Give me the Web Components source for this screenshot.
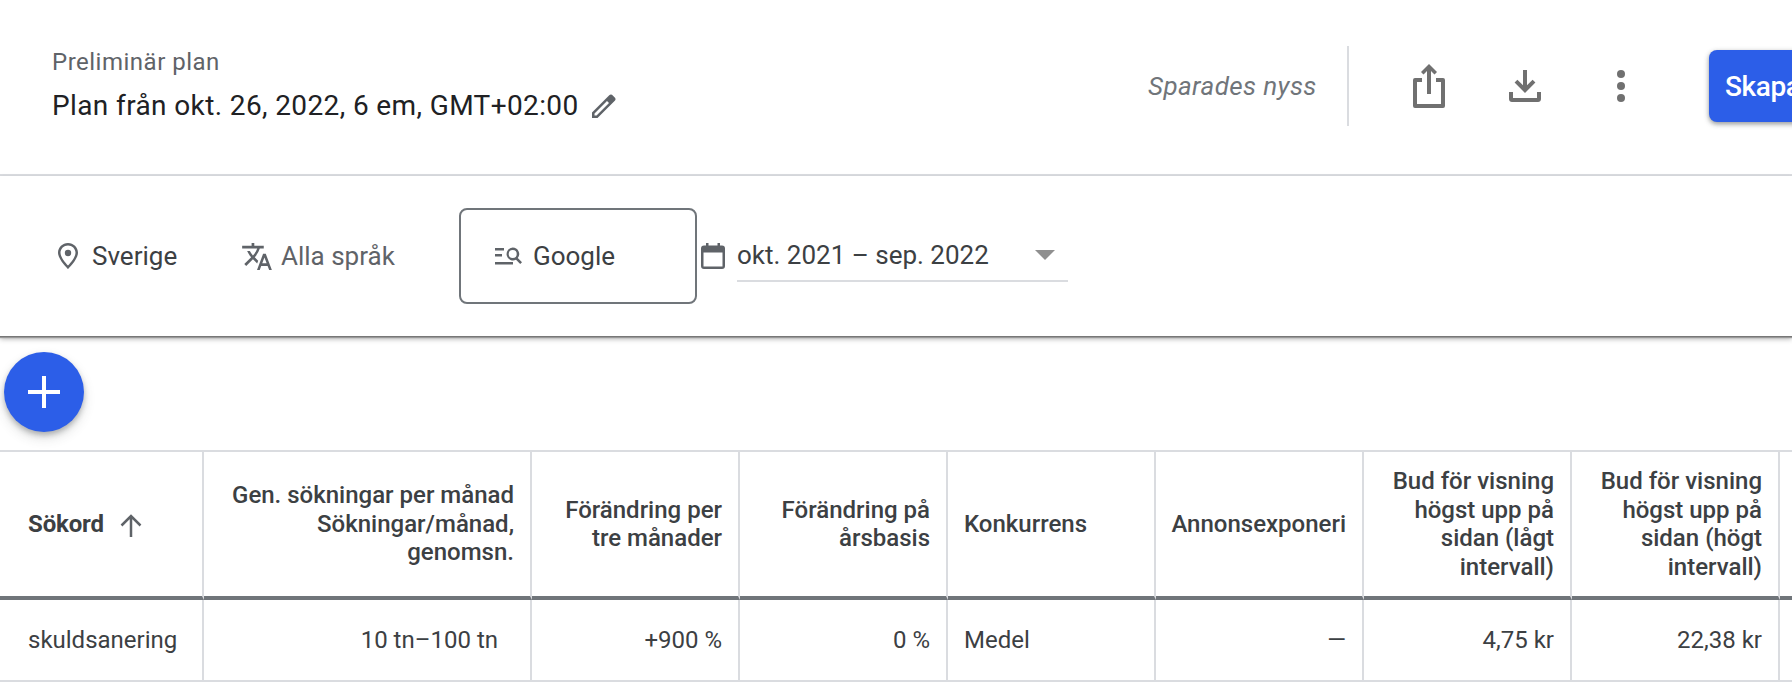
<!DOCTYPE html>
<html lang="sv"><head><meta charset="utf-8"><title>Plan</title>
<style>
html,body{margin:0;padding:0;background:#fff;overflow:hidden}
body{width:1792px;height:686px;font-family:Roboto,"Liberation Sans",sans-serif;color:#3c4043}
</style></head><body>
<plan-page>
  <plan-header></plan-header>
  <plan-filters></plan-filters>
  <plan-toolbar></plan-toolbar>
  <plan-table></plan-table>
</plan-page>
<script>
function def(name,html){customElements.define(name,class extends HTMLElement{constructor(){super();this.attachShadow({mode:'open'}).innerHTML=html;}});}
def('plan-page',`<style>:host{display:flex;flex-direction:column;width:1792px;height:686px;overflow:hidden}</style><slot></slot>`);
def('plan-header',`<style>
:host{display:flex;box-sizing:border-box;height:176px;border-bottom:2px solid #dadce0;width:1792px;padding:0 0 0 52px;align-items:flex-start;overflow:hidden}
.left{padding-top:48px;flex:0 0 1096px}
.sub{font-size:24px;line-height:28px;color:#5f6368;letter-spacing:.5px}
.title{display:flex;align-items:center;margin-top:12px;font-size:28px;line-height:36px;color:#202124;letter-spacing:.38px}
.title svg{margin-left:13px;width:24px;height:24px;fill:#5f6368;flex:none}
.right{display:flex;align-items:center;height:80px;margin-top:46px}
.saved{width:199px;flex:none;font-style:italic;font-size:26px;letter-spacing:.4px;color:#70757a;white-space:nowrap}
.div{width:2px;height:80px;background:#dadce0;flex:none}
.ic{fill:#707070;flex:none;display:block}
.share{margin-left:64px;width:32px;height:44px}
.dl{margin-left:64px;width:32px;height:32px}
.more{margin-left:76px;width:8px;height:32px}
.btn{margin-left:84px;flex:none;width:240px;height:72px;background:#2c5ee8;border-radius:8px;color:#fff;font-size:28px;font-weight:500;letter-spacing:-.4px;display:flex;align-items:center;padding-left:16px;box-sizing:border-box;box-shadow:0 2px 4px rgba(60,64,67,.4),0 2px 6px rgba(60,64,67,.2);white-space:nowrap}
</style>
<div class="left"><div class="sub">Preliminär plan</div><div class="title"><span>Plan från okt. 26, 2022, 6 em, GMT+02:00</span><svg viewBox="0 0 24 24"><path fill-rule="evenodd" d="M0 24V18.500L17 1.500Q18.500 0 20 .8L23 3.800Q24.200 5.300 22.800 6.800L5.500 24ZM2.500 19.500V21.500H4.500L17 9 15 7Z"/></svg></div></div>
<div class="right"><span class="saved">Sparades nyss</span><span class="div"></span>
<svg class="ic share" viewBox="0 0 32 44"><path d="M16 0L24 8 21.500 10.500 18 7V30H14V7L10.500 10.500 8 8Z"/><path d="M2 14H9V18H4V40H28V18H23V14H30Q32 14 32 16V42Q32 44 30 44H2Q0 44 0 42V16Q0 14 2 14Z"/></svg>
<svg class="ic dl" viewBox="0 0 32 32"><path d="M14 0h4v15.300l5.600-5.600 2.800 2.800L16 23 5.600 12.500l2.800-2.800L14 15.300zM0 22h4v6h24v-6h4v7c0 1.700-1.300 3-3 3H3c-1.700 0-3-1.300-3-3z"/></svg>
<svg class="ic more" viewBox="0 0 8 32"><circle cx="4" cy="4" r="4"/><circle cx="4" cy="16" r="4"/><circle cx="4" cy="28" r="4"/></svg>
<span class="btn">Skapa kampanj</span></div>`);
def('plan-filters',`<style>
:host{display:flex;box-sizing:border-box;height:160px;width:1792px;align-items:center;padding-left:58px;position:relative;z-index:1;background:#fff;box-shadow:0 1px 0 #777,0 2px 1px #999,0 3px 5px rgba(0,0,0,.3);font-size:26px;overflow:visible}
.it{display:flex;align-items:center;flex:none}
svg{flex:none;fill:#5f6368}
.loc{width:184px}.loc svg{width:20px;height:26px;margin-right:14px}
.lang{width:217px;color:#5f6368}.lang svg{width:30px;height:27px;margin-right:9px}
.box{width:238px;height:96px;box-sizing:border-box;border:2px solid #70757a;border-radius:8px;padding-left:34px}
.box svg{width:27px;height:18px;margin-right:11px}
.date{display:flex;align-items:center;flex:none}
.cal{width:24px;height:26px;margin-left:4px;margin-right:12px}
.sel{width:331px;height:52px;box-sizing:border-box;border-bottom:2px solid #dadce0;display:flex;align-items:center;justify-content:space-between;color:#3c4043;padding-right:13px}
.tri{width:0;height:0;border-left:10px solid transparent;border-right:10px solid transparent;border-top:10px solid #8f8f8f}
</style>
<div class="it loc"><svg viewBox="1 1 20 26"><path fill-rule="evenodd" d="M11 1C5.500 1 1 5.300 1 10.800 1 17.500 11 27 11 27s10-9.500 10-16.200C21 5.300 16.500 1 11 1zm0 2.500c4.100 0 7.500 3.200 7.500 7.300 0 4-4.500 9.700-7.500 12.700-3-3-7.500-8.700-7.500-12.700 0-4.100 3.400-7.300 7.500-7.300z"/><circle cx="11" cy="11" r="3.200"/></svg><span>Sverige</span></div>
<div class="it lang"><svg viewBox="1 2 22 20"><path d="M12.870 15.070l-2.540-2.510.030-.03A17.520 17.520 0 0 0 14.070 6H17V4h-7V2H8v2H1v1.990h11.170C11.500 7.920 10.440 9.750 9 11.350 8.070 10.320 7.300 9.190 6.690 8h-2c.73 1.630 1.730 3.170 2.980 4.560l-5.090 5.020L4 19l5-5 3.110 3.110.76-2.040zM18.500 10h-2L12 22h2l1.120-3h4.750L21 22h2l-4.500-12zm-2.620 7l1.620-4.330L19.120 17h-3.240z"/></svg><span>Alla språk</span></div>
<div class="it box"><svg viewBox="0 0 27 18"><path d="M0 1h9v2.400H0zM0 7h7v2.400H0zM0 15h18v2.400H0z"/><path fill-rule="evenodd" d="M17.700 .5a6.500 6.500 0 0 1 5.100 10.500l4.200 4.200-1.800 1.800-4.200-4.200A6.500 6.500 0 1 1 17.700 .5zm0 2.500a4 4 0 1 0 0 8 4 4 0 0 0 0-8z"/></svg><span>Google</span></div>
<div class="date"><svg class="cal" viewBox="0 0 24 26"><path fill-rule="evenodd" d="M5 0h2.500v2.500h9V0H19v2.500h2a3 3 0 0 1 3 3V23a3 3 0 0 1-3 3H3a3 3 0 0 1-3-3V5.500a3 3 0 0 1 3-3h2zM2.500 9.500V23.500h19V9.500z"/></svg><div class="sel"><span>okt. 2021 – sep. 2022</span><span class="tri"></span></div></div>`);
def('plan-toolbar',`<style>
:host{display:flex;box-sizing:border-box;height:114px;width:1792px;padding:16px 0 0 4px}
.fab{width:80px;height:80px;border-radius:50%;background:#2c5ee8;display:flex;align-items:center;justify-content:center;box-shadow:0 3px 5px rgba(60,64,67,.3),0 6px 12px rgba(60,64,67,.18)}
svg{width:32px;height:32px;stroke:#fff;stroke-width:4;fill:none}
</style><div class="fab"><svg viewBox="0 0 32 32"><path d="M16 0v32M0 16h32"/></svg></div>`);
def('plan-table',`<style>
:host{display:block;width:1792px;overflow:hidden}
.g{display:grid;grid-template-columns:204px 328px 208px 208px 208px 208px 208px 208px 100px;width:1880px}
.h,.c{box-sizing:border-box;border-right:2px solid #dadce0;font-size:24px;padding:0 16px}
.h{height:150px;border-top:2px solid #dadce0;border-bottom:4px solid #70757a;display:flex;align-items:center;justify-content:flex-end;text-align:right;font-weight:500;line-height:28.500px;color:#3c4043}
.c{height:82px;border-bottom:2px solid #dadce0;display:flex;align-items:center;justify-content:flex-end;color:#3c4043}
.l{justify-content:flex-start;text-align:left}
.k{padding-left:28px;font-weight:700;letter-spacing:-.15px;color:#3c4043}
.k svg{width:26px;height:26px;margin-left:14px;margin-top:4px;stroke:#5f6368;stroke-width:2.500;fill:none;flex:none}
.ck{padding-left:28px}
.p{padding-right:32px}
.n{white-space:nowrap}
</style><div class="g">
<div class="h l k">Sökord<svg viewBox="0 0 26 26"><path d="M13 24V3M3.500 12.500L13 3l9.500 9.500"/></svg></div>
<div class="h">Gen. sökningar per månad<br>Sökningar/månad,<br>genomsn.</div>
<div class="h">Förändring per tre månader</div>
<div class="h">Förändring på årsbasis</div>
<div class="h l">Konkurrens</div>
<div class="h n">Annonsexponeri</div>
<div class="h">Bud för visning högst upp på sidan (lågt intervall)</div>
<div class="h">Bud för visning högst upp på sidan (högt intervall)</div>
<div class="h"></div>
<div class="c l ck">skuldsanering</div>
<div class="c p">10 tn–100 tn</div>
<div class="c">+900 %</div>
<div class="c">0 %</div>
<div class="c l">Medel</div>
<div class="c">—</div>
<div class="c">4,75 kr</div>
<div class="c">22,38 kr</div>
<div class="c"></div>
</div>`);
</script></body></html>
